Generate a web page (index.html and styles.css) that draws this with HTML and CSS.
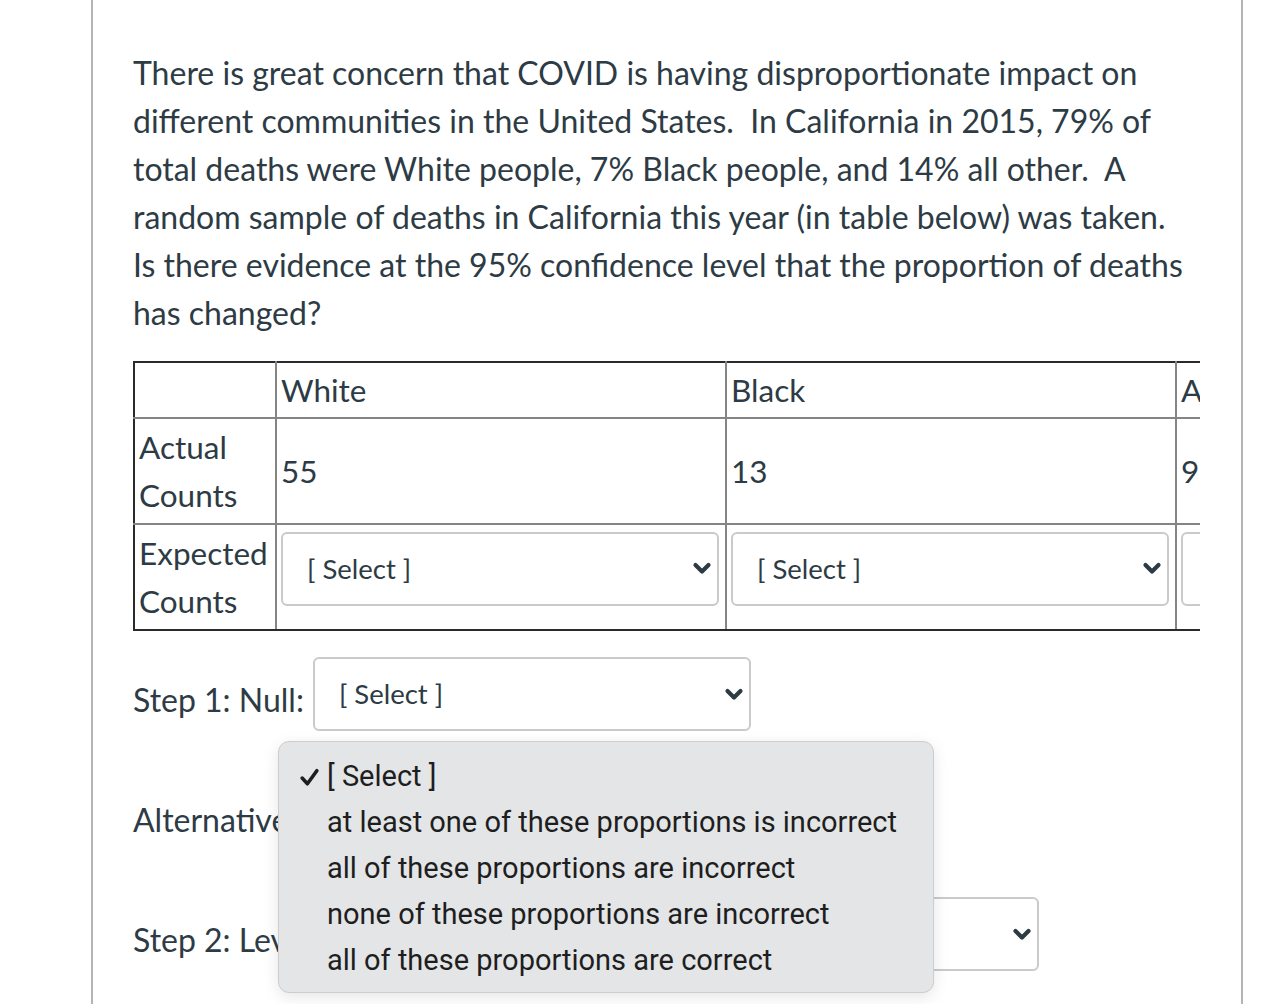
FILE: index.html
```html
<!DOCTYPE html>
<html>
<head>
<meta charset="utf-8">
<link rel="stylesheet" href="styles.css">
</head>
<body>
<div class="page">
  <div class="question">
    <p class="prompt">There is great concern that COVID is having disproportionate impact on different communities in the United States.&nbsp; In California in 2015, 79% of total deaths were White people, 7% Black people, and 14% all other.&nbsp; A random sample of deaths in California this year (in table below) was taken.&nbsp; Is there evidence at the 95% confidence level that the proportion of deaths has changed?</p>
    <div class="table-wrap">
      <table class="data">
        <colgroup>
          <col class="c1">
          <col class="c2">
          <col class="c2">
          <col class="c2">
        </colgroup>
        <tr class="head">
          <td></td>
          <td>White</td>
          <td>Black</td>
          <td>All other</td>
        </tr>
        <tr>
          <td>Actual<br>Counts</td>
          <td>55</td>
          <td>13</td>
          <td>9</td>
        </tr>
        <tr>
          <td>Expected<br>Counts</td>
          <td><div class="select cell-select"><span>[ Select ]</span><svg class="chev" viewBox="0 0 20 13"><path d="M3.5 3 L10 9.5 L16.5 3" /></svg></div></td>
          <td><div class="select cell-select"><span>[ Select ]</span><svg class="chev" viewBox="0 0 20 13"><path d="M3.5 3 L10 9.5 L16.5 3" /></svg></div></td>
          <td><div class="select cell-select"><span>[ Select ]</span><svg class="chev" viewBox="0 0 20 13"><path d="M3.5 3 L10 9.5 L16.5 3" /></svg></div></td>
        </tr>
      </table>
    </div>
    <div class="step">
      <span class="label">Step 1: Null:</span>
      <div class="select step-select"><span>[ Select ]</span><svg class="chev" viewBox="0 0 20 13"><path d="M3.5 3 L10 9.5 L16.5 3" /></svg></div>
    </div>
    <div class="step">
      <span class="label">Alternative:</span>
      <div class="select step-select"><span>[ Select ]</span><svg class="chev" viewBox="0 0 20 13"><path d="M3.5 3 L10 9.5 L16.5 3" /></svg></div>
    </div>
    <div class="step">
      <span class="label label-wide">Step 2: Level of significance:</span>
      <div class="select step-select"><span>[ Select ]</span><svg class="chev" viewBox="0 0 20 13"><path d="M3.5 3 L10 9.5 L16.5 3" /></svg></div>
    </div>
  </div>
  <ul class="popup">
    <li class="checked"><svg class="tick" viewBox="0 0 20 20"><path d="M3 10.5 L8 16 L17 3.5" /></svg>[ Select ]</li>
    <li>at least one of these proportions is incorrect</li>
    <li>all of these proportions are incorrect</li>
    <li>none of these proportions are incorrect</li>
    <li>all of these proportions are correct</li>
  </ul>
</div>
</body>
</html>
```
FILE: styles.css
```css
html, body {
  margin: 0;
  padding: 0;
  background: #ffffff;
}
body {
  font-family: Lato, "Open Sans", sans-serif;
  color: #2d3b45;
  overflow: hidden;
  height: 1004px;
}
.page {
  position: relative;
  margin-left: 91px;
  width: 1148px;
  height: 1004px;
  border-left: 2px solid #b4b4b4;
  border-right: 2px solid #b4b4b4;
}
.question {
  padding: 49px 40px 0 40px;
  font-size: 32px;
  line-height: 48px;
}
.prompt {
  margin: 0 0 24px 0;
}
.table-wrap {
  overflow: hidden;
  width: 1067px;
}
.data {
  border-collapse: collapse;
  border: 2px solid #2a2a2a;
  width: 1492px;
  table-layout: fixed;
}
.data col.c1 { width: 142px; }
.data col.c2 { width: 450px; }
.data td {
  border: 2px solid #858585;
  padding: 4px 4px;
  vertical-align: middle;
  font-size: 31.5px;
  line-height: 48px;
  white-space: nowrap;
  overflow: hidden;
}
.data tr.head td {
  padding-top: 3px;
  padding-bottom: 3px;
}
.data tr:first-child td { border-top: 2px solid #2a2a2a; }
.data tr:last-child td { border-bottom: 2px solid #2a2a2a; }
.data td:first-child { border-left: 2px solid #2a2a2a; }
.select {
  box-sizing: border-box;
  display: flex;
  align-items: center;
  justify-content: space-between;
  height: 74px;
  border: 2px solid #cacaca;
  border-radius: 6px;
  background: #fff;
  padding: 0 5px 0 24px;
  font-size: 27.5px;
  color: #2d3b45;
}
.cell-select {
  width: 438px;
  margin: 1px 0 18px 0;
}
.chev {
  width: 20px;
  height: 13px;
  fill: none;
  stroke: #2d3b45;
  stroke-width: 4.2;
  stroke-linecap: round;
  stroke-linejoin: round;
}
.step {
  display: flex;
  align-items: center;
  gap: 9px;
  margin-top: 26px;
  height: 74px;
}
.step + .step {
  margin-top: 46px;
}
.step .label {
  padding-top: 12px;
  white-space: nowrap;
}
.step .label-wide {
  width: 459px;
}
.step-select {
  width: 438px;
  flex: none;
}
.popup {
  position: absolute;
  left: 185px;
  top: 741px;
  width: 656px;
  height: 252px;
  box-sizing: border-box;
  margin: 0;
  padding: 11px 0 0 0;
  list-style: none;
  background: #e3e5e7;
  border: 1px solid #cbcdcf;
  border-radius: 11px;
  box-shadow: 0 4px 16px rgba(0,0,0,0.10);
  font-family: Roboto, "Liberation Sans", sans-serif;
  font-size: 29px;
  color: #1e1e1e;
}
.popup li {
  height: 46px;
  line-height: 46px;
  padding-left: 48px;
  position: relative;
  white-space: nowrap;
}
.popup .tick {
  position: absolute;
  left: 20px;
  top: 14px;
  width: 21px;
  height: 21px;
  fill: none;
  stroke: #1e1e1e;
  stroke-width: 3.4;
  stroke-linecap: round;
  stroke-linejoin: round;
}
```
